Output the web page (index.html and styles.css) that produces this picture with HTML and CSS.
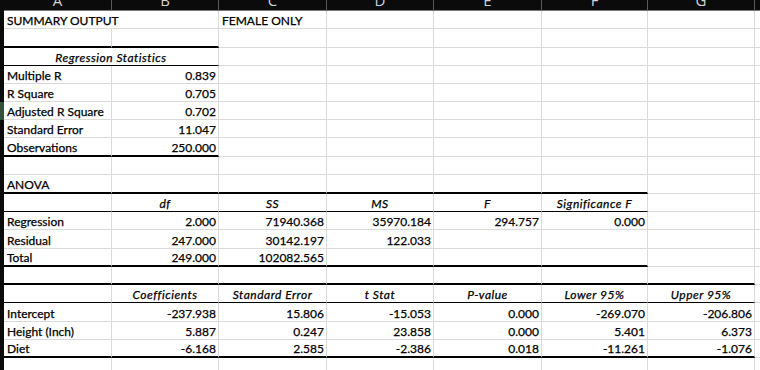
FILE: index.html
```html
<!DOCTYPE html>
<html>
<head>
<meta charset="utf-8">
<title>Summary Output</title>
<link rel="stylesheet" href="styles.css">
</head>
<body>
<div class="sheet">
  <!-- column headers -->
  <div class="rh"></div>
  <div class="ch"><span>A</span></div>
  <div class="ch"><span>B</span></div>
  <div class="ch"><span>C</span></div>
  <div class="ch"><span>D</span></div>
  <div class="ch"><span>E</span></div>
  <div class="ch"><span>F</span></div>
  <div class="ch"><span>G</span></div>
  <div class="ch"></div>

  <!-- row 1 -->
  <div class="rh"></div>
  <div class="c nr">SUMMARY OUTPUT</div>
  <div class="c"></div>
  <div class="c">FEMALE ONLY</div>
  <div class="c"></div><div class="c"></div><div class="c"></div><div class="c"></div><div class="c"></div>

  <!-- row 2 -->
  <div class="rh"></div>
  <div class="c b2"></div><div class="c b2"></div>
  <div class="c"></div><div class="c"></div><div class="c"></div><div class="c"></div><div class="c"></div><div class="c"></div>

  <!-- row 3 -->
  <div class="rh"></div>
  <div class="c h b1 span2">Regression Statistics</div>
  <div class="c"></div><div class="c"></div><div class="c"></div><div class="c"></div><div class="c"></div><div class="c"></div>

  <!-- row 4 -->
  <div class="rh"></div>
  <div class="c">Multiple R</div><div class="c n">0.839</div>
  <div class="c"></div><div class="c"></div><div class="c"></div><div class="c"></div><div class="c"></div><div class="c"></div>

  <!-- row 5 -->
  <div class="rh"></div>
  <div class="c">R Square</div><div class="c n">0.705</div>
  <div class="c"></div><div class="c"></div><div class="c"></div><div class="c"></div><div class="c"></div><div class="c"></div>

  <!-- row 6 -->
  <div class="rh sel"></div>
  <div class="c">Adjusted R Square</div><div class="c n">0.702</div>
  <div class="c"></div><div class="c"></div><div class="c"></div><div class="c"></div><div class="c"></div><div class="c"></div>

  <!-- row 7 -->
  <div class="rh"></div>
  <div class="c">Standard Error</div><div class="c n">11.047</div>
  <div class="c"></div><div class="c"></div><div class="c"></div><div class="c"></div><div class="c"></div><div class="c"></div>

  <!-- row 8 -->
  <div class="rh"></div>
  <div class="c b2">Observations</div><div class="c n b2">250.000</div>
  <div class="c"></div><div class="c"></div><div class="c"></div><div class="c"></div><div class="c"></div><div class="c"></div>

  <!-- row 9 -->
  <div class="rh"></div>
  <div class="c"></div><div class="c"></div><div class="c"></div><div class="c"></div><div class="c"></div><div class="c"></div><div class="c"></div><div class="c"></div>

  <!-- row 10 -->
  <div class="rh"></div>
  <div class="c b2">ANOVA</div>
  <div class="c b2"></div><div class="c b2"></div><div class="c b2"></div><div class="c b2"></div><div class="c b2"></div>
  <div class="c"></div><div class="c"></div>

  <!-- row 11 -->
  <div class="rh"></div>
  <div class="c b1"></div>
  <div class="c h b1">df</div>
  <div class="c h b1">SS</div>
  <div class="c h b1">MS</div>
  <div class="c h b1">F</div>
  <div class="c h b1">Significance F</div>
  <div class="c"></div><div class="c"></div>

  <!-- row 12 -->
  <div class="rh"></div>
  <div class="c">Regression</div>
  <div class="c n">2.000</div>
  <div class="c n">71940.368</div>
  <div class="c n">35970.184</div>
  <div class="c n">294.757</div>
  <div class="c n">0.000</div>
  <div class="c"></div><div class="c"></div>

  <!-- row 13 -->
  <div class="rh"></div>
  <div class="c">Residual</div>
  <div class="c n">247.000</div>
  <div class="c n">30142.197</div>
  <div class="c n">122.033</div>
  <div class="c"></div><div class="c"></div><div class="c"></div><div class="c"></div>

  <!-- row 14 -->
  <div class="rh"></div>
  <div class="c b2">Total</div>
  <div class="c n b2">249.000</div>
  <div class="c n b2">102082.565</div>
  <div class="c b2"></div><div class="c b2"></div><div class="c b2"></div>
  <div class="c"></div><div class="c"></div>

  <!-- row 15 -->
  <div class="rh"></div>
  <div class="c b2"></div><div class="c b2"></div><div class="c b2"></div><div class="c b2"></div><div class="c b2"></div><div class="c b2"></div><div class="c b2"></div>
  <div class="c"></div>

  <!-- row 16 -->
  <div class="rh"></div>
  <div class="c b1"></div>
  <div class="c h b1">Coefficients</div>
  <div class="c h b1">Standard Error</div>
  <div class="c h b1">t Stat</div>
  <div class="c h b1">P-value</div>
  <div class="c h b1">Lower 95%</div>
  <div class="c h b1">Upper 95%</div>
  <div class="c"></div>

  <!-- row 17 -->
  <div class="rh"></div>
  <div class="c">Intercept</div>
  <div class="c n">-237.938</div>
  <div class="c n">15.806</div>
  <div class="c n">-15.053</div>
  <div class="c n">0.000</div>
  <div class="c n">-269.070</div>
  <div class="c n">-206.806</div>
  <div class="c"></div>

  <!-- row 18 -->
  <div class="rh"></div>
  <div class="c">Height (Inch)</div>
  <div class="c n">5.887</div>
  <div class="c n">0.247</div>
  <div class="c n">23.858</div>
  <div class="c n">0.000</div>
  <div class="c n">5.401</div>
  <div class="c n">6.373</div>
  <div class="c"></div>

  <!-- row 19 -->
  <div class="rh"></div>
  <div class="c b2">Diet</div>
  <div class="c n b2">-6.168</div>
  <div class="c n b2">2.585</div>
  <div class="c n b2">-2.386</div>
  <div class="c n b2">0.018</div>
  <div class="c n b2">-11.261</div>
  <div class="c n b2">-1.076</div>
  <div class="c"></div>

  <!-- row 20 -->
  <div class="rh"></div>
  <div class="c"></div><div class="c"></div><div class="c"></div><div class="c"></div><div class="c"></div><div class="c"></div><div class="c"></div><div class="c"></div>
</div>
</body>
</html>
```

FILE: styles.css
```css
html, body {
  margin: 0;
  padding: 0;
  background: #ffffff;
}

body {
  width: 760px;
  height: 370px;
  overflow: hidden;
  font-family: "Lato", "Liberation Sans", sans-serif;
  font-size: 12px;
  color: #000000;
}

.sheet {
  display: grid;
  grid-template-columns: 4px 108px 107px 108px 107px 108px 106px 107px 1fr;
  grid-template-rows: 11px 18px 19px 18px 18px 18px 18px 18px 19px 18px 19px 18px 18px 19px 18px 18px 18px 19px 18px 18px 18px;
  width: 760px;
}

.rh {
  background: #0b0b0b;
}

.rh.sel {
  background: #34503c;
}

.ch {
  background: #0b0b0b;
  border-right: 1px solid #5a5a5a;
  border-bottom: 1px solid #7a7a7a;
  display: flex;
  align-items: flex-end;
  justify-content: center;
  overflow: hidden;
  padding-bottom: 2px;
  font-family: "Open Sans", "Noto Sans", sans-serif;
  font-size: 15px;
  line-height: 15px;
  color: #d2d2d2;
}

.c {
  box-sizing: border-box;
  border-right: 1px solid #dadada;
  border-bottom: 1px solid #dadada;
  display: flex;
  align-items: flex-end;
  padding: 0 3px 0 3px;
  line-height: 14px;
  white-space: nowrap;
  min-width: 0;
  -webkit-text-stroke: 0.25px #000000;
}

.c.nr {
  border-right-color: transparent;
}

.n {
  justify-content: flex-end;
  padding-right: 2px;
}

.h {
  justify-content: center;
  font-style: italic;
  letter-spacing: 0.5px;
}

.span2 {
  grid-column: span 2;
}

.b1 {
  border-bottom: 1px solid #000000;
}

.b2 {
  border-bottom: 2px solid #000000;
}
```
